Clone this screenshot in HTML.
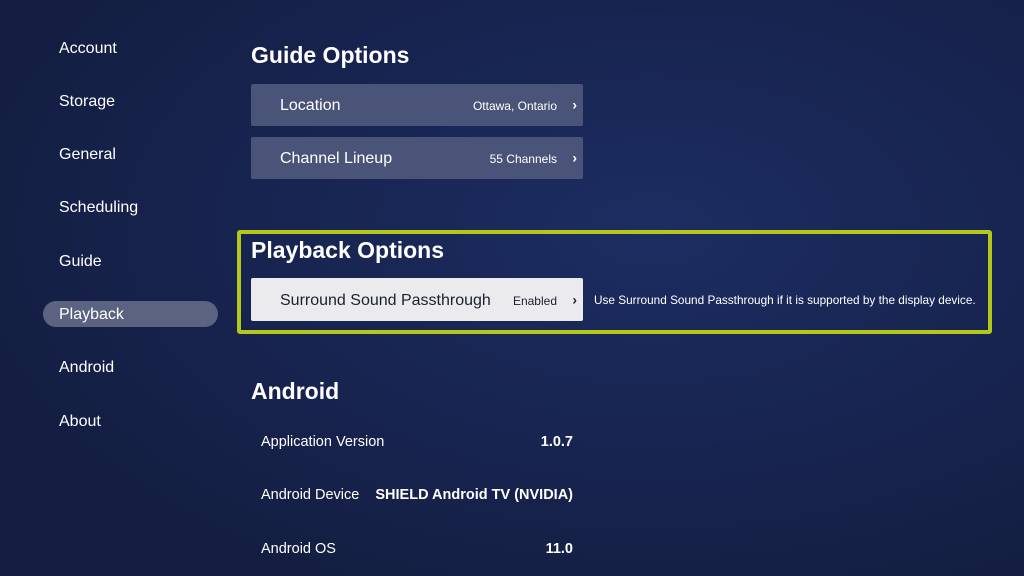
<!DOCTYPE html>
<html><head><meta charset="utf-8"><style>
*{margin:0;padding:0;box-sizing:border-box}
body{width:1024px;height:576px;overflow:hidden;font-family:"Liberation Sans",sans-serif;color:#fff;
background:radial-gradient(ellipse 700px 400px at 650px 230px,#1c2d61 0%,#182552 50%,#141e42 100%);position:relative}
.a{position:absolute;white-space:nowrap}
.m{left:59px;font-size:16px;transform:translateY(-50%);margin-top:1px}
.h{font-size:23px;font-weight:bold;left:251px}
.btn{position:absolute;left:251px;width:332px;height:42px;background:#4a5479;border-radius:2px;font-size:16px}
.btn .l{position:absolute;left:29px;top:50%;transform:translateY(-50%);margin-top:1px}
.btn .r{position:absolute;right:26px;top:50%;transform:translateY(-50%);font-size:12px;margin-top:1px}
.btn .c{position:absolute;right:6px;top:50%;transform:translateY(-54%);font-size:14px;font-weight:bold}
.row{position:absolute;left:261px;width:312px;font-size:14.5px;transform:translateY(-50%);margin-top:1px}
.row b{position:absolute;right:0;top:0}
</style></head><body>
<div class="a" style="left:43px;top:301px;width:175px;height:26px;border-radius:13px;background:#5b6380"></div>
<div class="a m" style="top:48px">Account</div>
<div class="a m" style="top:101px">Storage</div>
<div class="a m" style="top:154px">General</div>
<div class="a m" style="top:207px">Scheduling</div>
<div class="a m" style="top:261px">Guide</div>
<div class="a m" style="top:314px">Playback</div>
<div class="a m" style="top:367px">Android</div>
<div class="a m" style="top:421px">About</div>

<div class="a h" style="top:42px">Guide Options</div>
<div class="btn" style="top:84px"><span class="l">Location</span><span class="r">Ottawa, Ontario</span><span class="c">›</span></div>
<div class="btn" style="top:137px"><span class="l">Channel Lineup</span><span class="r">55 Channels</span><span class="c">›</span></div>

<div class="a" style="left:237px;top:230px;width:755px;height:104px;border:4px solid #b4c819;border-radius:3px"></div>
<div class="a h" style="top:237px">Playback Options</div>
<div class="btn" style="top:278px;height:43px;background:#ebebee;color:#1a1f33"><span class="l">Surround Sound Passthrough</span><span class="r">Enabled</span><span class="c">›</span></div>
<div class="a" style="left:594px;top:293px;font-size:11.8px">Use Surround Sound Passthrough if it is supported by the display device.</div>

<div class="a h" style="top:378px">Android</div>
<div class="row" style="top:441px">Application Version<b>1.0.7</b></div>
<div class="row" style="top:494px">Android Device<b>SHIELD Android TV (NVIDIA)</b></div>
<div class="row" style="top:548px">Android OS<b>11.0</b></div>
</body></html>
